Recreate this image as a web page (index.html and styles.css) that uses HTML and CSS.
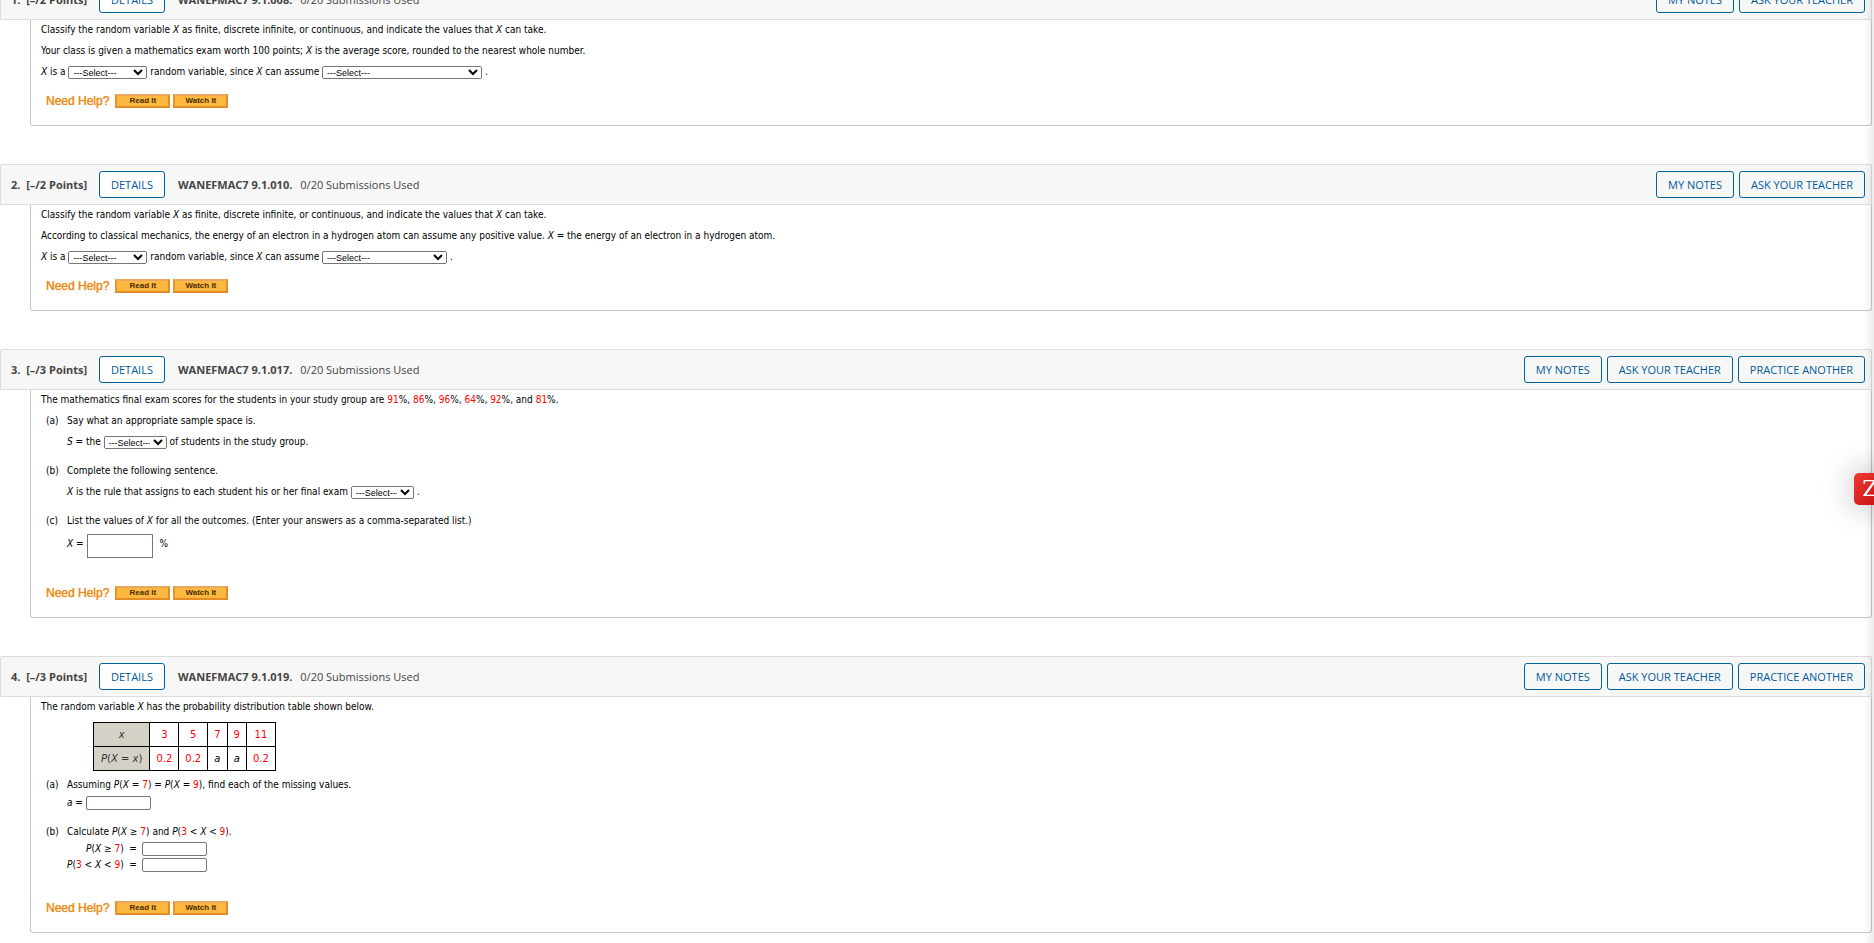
FILE: index.html
```html
<!DOCTYPE html>
<html lang="en">
<head>
<meta charset="utf-8">
<title>Homework</title>
<link rel="stylesheet" href="styles.css">
</head>
<body>
<main class="assignment">

  <section class="question">
    <header class="bar">
      <span class="points">1.&nbsp; [–/2 Points]</span>
      <button class="btn details" type="button">DETAILS</button>
      <strong class="code">WANEFMAC7 9.1.008.</strong>
      <span class="used">0/20 Submissions Used</span>
      <div class="actions">
        <button class="btn" type="button">MY NOTES</button>
        <button class="btn" type="button">ASK YOUR TEACHER</button>
      </div>
    </header>
    <div class="body">
      <p>Classify the random variable <i>X</i> as finite, discrete infinite, or continuous, and indicate the values that <i>X</i> can take.</p>
      <p>Your class is given a mathematics exam worth 100 points; <i>X</i> is the average score, rounded to the nearest whole number.</p>
      <p><i>X</i> is a <select class="sel kind" aria-label="Kind of variable"><option>---Select---</option></select> random variable, since <i>X</i> can assume <select class="sel wide" aria-label="Values"><option>---Select---</option></select> .</p>
      <div class="help"><span class="help-label">Need Help?</span><button class="help-btn" type="button">Read It</button><button class="help-btn" type="button">Watch It</button></div>
    </div>
  </section>

  <section class="question">
    <header class="bar">
      <span class="points">2.&nbsp; [–/2 Points]</span>
      <button class="btn details" type="button">DETAILS</button>
      <strong class="code">WANEFMAC7 9.1.010.</strong>
      <span class="used">0/20 Submissions Used</span>
      <div class="actions">
        <button class="btn" type="button">MY NOTES</button>
        <button class="btn" type="button">ASK YOUR TEACHER</button>
      </div>
    </header>
    <div class="body">
      <p>Classify the random variable <i>X</i> as finite, discrete infinite, or continuous, and indicate the values that <i>X</i> can take.</p>
      <p>According to classical mechanics, the energy of an electron in a hydrogen atom can assume any positive value. <i>X</i> = the energy of an electron in a hydrogen atom.</p>
      <p><i>X</i> is a <select class="sel kind" aria-label="Kind of variable"><option>---Select---</option></select> random variable, since <i>X</i> can assume <select class="sel medium" aria-label="Values"><option>---Select---</option></select> .</p>
      <div class="help"><span class="help-label">Need Help?</span><button class="help-btn" type="button">Read It</button><button class="help-btn" type="button">Watch It</button></div>
    </div>
  </section>

  <section class="question">
    <header class="bar">
      <span class="points">3.&nbsp; [–/3 Points]</span>
      <button class="btn details" type="button">DETAILS</button>
      <strong class="code">WANEFMAC7 9.1.017.</strong>
      <span class="used">0/20 Submissions Used</span>
      <div class="actions">
        <button class="btn" type="button">MY NOTES</button>
        <button class="btn" type="button">ASK YOUR TEACHER</button>
        <button class="btn" type="button">PRACTICE ANOTHER</button>
      </div>
    </header>
    <div class="body">
      <p>The mathematics final exam scores for the students in your study group are <b>91</b>%, <b>86</b>%, <b>96</b>%, <b>64</b>%, <b>92</b>%, and <b>81</b>%.</p>
      <div class="parts">
        <div class="part">
          <span>(a)</span>
          <div>
            <p>Say what an appropriate sample space is.</p>
            <p><i>S</i> = the <select class="sel short" aria-label="Sample space"><option>---Select---</option></select> of students in the study group.</p>
          </div>
        </div>
        <div class="part">
          <span>(b)</span>
          <div>
            <p>Complete the following sentence.</p>
            <p><i>X</i> is the rule that assigns to each student his or her final exam <select class="sel short" aria-label="Rule"><option>---Select---</option></select> .</p>
          </div>
        </div>
        <div class="part">
          <span>(c)</span>
          <div>
            <p>List the values of <i>X</i> for all the outcomes. (Enter your answers as a comma-separated list.)</p>
            <div class="answer"><label for="x-values"><i>X</i> =</label><input class="math" id="x-values" type="text"><span>%</span></div>
          </div>
        </div>
      </div>
      <div class="help far"><span class="help-label">Need Help?</span><button class="help-btn" type="button">Read It</button><button class="help-btn" type="button">Watch It</button></div>
    </div>
  </section>

  <section class="question">
    <header class="bar">
      <span class="points">4.&nbsp; [–/3 Points]</span>
      <button class="btn details" type="button">DETAILS</button>
      <strong class="code">WANEFMAC7 9.1.019.</strong>
      <span class="used">0/20 Submissions Used</span>
      <div class="actions">
        <button class="btn" type="button">MY NOTES</button>
        <button class="btn" type="button">ASK YOUR TEACHER</button>
        <button class="btn" type="button">PRACTICE ANOTHER</button>
      </div>
    </header>
    <div class="body">
      <p>The random variable <i>X</i> has the probability distribution table shown below.</p>
      <table class="dist">
        <tr><th scope="row"><i>x</i></th><td><b>3</b></td><td><b>5</b></td><td><b>7</b></td><td><b>9</b></td><td><b>11</b></td></tr>
        <tr><th scope="row"><i>P</i>(<i>X</i> = <i>x</i>)</th><td><b>0.2</b></td><td><b>0.2</b></td><td><i>a</i></td><td><i>a</i></td><td><b>0.2</b></td></tr>
      </table>
      <div class="parts">
        <div class="part">
          <span>(a)</span>
          <div>
            <p>Assuming <i>P</i>(<i>X</i> = <b>7</b>) = <i>P</i>(<i>X</i> = <b>9</b>), find each of the missing values.</p>
            <div class="answer"><label for="a-value"><i>a</i> =</label><input class="num" id="a-value" type="text"></div>
          </div>
        </div>
        <div class="part">
          <span>(b)</span>
          <div>
            <p>Calculate <i>P</i>(<i>X</i> ≥ <b>7</b>) and <i>P</i>(<b>3</b> &lt; <i>X</i> &lt; <b>9</b>).</p>
            <div class="equations">
              <label for="p1"><i>P</i>(<i>X</i> ≥ <b>7</b>) &nbsp;=</label><input class="num" id="p1" type="text">
              <label for="p2"><i>P</i>(<b>3</b> &lt; <i>X</i> &lt; <b>9</b>) &nbsp;=</label><input class="num" id="p2" type="text">
            </div>
          </div>
        </div>
      </div>
      <div class="help far"><span class="help-label">Need Help?</span><button class="help-btn" type="button">Read It</button><button class="help-btn" type="button">Watch It</button></div>
    </div>
  </section>
</main>

<div class="edge"></div>
<button class="tab" type="button" aria-label="Open side panel">Z</button>
</body>
</html>
```
FILE: styles.css
```css
* { box-sizing: border-box; }

html { overflow: hidden; }

body {
  margin: 0;
  background: #fff;
  color: #000;
  font: 10px/18px "DejaVu Sans Condensed", Tahoma, sans-serif;
}

/* Scrolled slightly into the first question */
.assignment {
  margin-top: -21px;
  padding-right: 2px;
}

.question { margin-bottom: 38px; }

.bar {
  display: flex;
  align-items: center;
  padding: 6px 6px 6px 10px;
  border: 1px solid #dcdcdc;
  border-radius: 2px 2px 0 0;
  background: #f7f7f7;
  color: #444;
  font: 11px/16px "Open Sans", sans-serif;
}

.points, .code { font-weight: 700; }
.points { width: 76px; margin-right: 12px; white-space: nowrap; }
.code { margin: 0 8px 0 13px; }

.actions {
  display: flex;
  gap: 5px;
  margin-left: auto;
}

.btn {
  height: 27px;
  padding: 0 11px;
  border: 1px solid #006298;
  border-radius: 3px;
  background: #fff0;
  color: #00599c;
  font: 11px/16px "Open Sans", sans-serif;
  white-space: nowrap;
}
.details { background: #fff; }

.body {
  margin-left: 30px;
  padding: 1px 10px 17px;
  border: 1px solid #c8c8c8;
  border-top: 0;
  border-radius: 0 0 3px 3px;
}

p { margin: 0; }
p + p { margin-top: 3px; }
b { color: #f00; font-weight: 400; }

.sel {
  height: 13px;
  padding: 0;
  vertical-align: middle;
  font: 9px "Liberation Sans", Arial, sans-serif;
}
.kind { width: 79px; }
.wide { width: 160px; }
.medium { width: 125px; }
.short { width: 63px; }

.parts {
  display: grid;
  gap: 11px;
  margin: 3px 0 0 5px;
}
.part {
  display: grid;
  grid-template-columns: 21px 1fr;
}

.answer { display: flex; align-items: center; }

.math, .num {
  padding: 0 2px;
  border: 1px solid #767676;
  background: #fff;
}
.math {
  width: 66px;
  height: 24px;
  margin: 4px 7px 0 3px;
}
.num {
  width: 65px;
  height: 14px;
  border-radius: 2px;
}
.answer .num { margin-left: 3px; }

.equations {
  display: grid;
  grid-template-columns: max-content max-content;
  grid-auto-rows: 16px;
  column-gap: 5px;
  align-items: center;
  text-align: right;
}

.dist {
  margin: 6px 0 5px 52px;
  border-collapse: collapse;
  font-family: "DejaVu Sans", Verdana, sans-serif;
  line-height: 15px;
  text-align: center;
}
.dist th, .dist td {
  padding: 4px 6px;
  border: 1px solid #000;
  font-weight: 400;
}
.dist th { padding: 4px 7px; background: #d6d1c7; color: #333; }

.help {
  display: flex;
  align-items: center;
  gap: 3px;
  height: 14px;
  margin: 13px 0 0 5px;
}
.far { margin-top: 28px; }

.help-label {
  margin-right: 3px;
  color: #ea8a1c;
  font: 12px/14px "Liberation Sans", Arial, sans-serif;
  text-shadow: 0 0 1px #ea8a1c;
}
.help-btn {
  width: 55px;
  height: 14px;
  padding: 0;
  border: 2px solid;
  border-color: #e8a860 #e68a28 #e58b27 #e9932f;
  background: #fdb93f;
  color: #4a2c00;
  font: bold 8px/10px "Liberation Sans", Arial, sans-serif;
}

/* Side panel: its shadow and pull tab overlap the page's right edge */
.edge {
  position: fixed;
  inset: 0 0 0 auto;
  width: 10px;
  background: linear-gradient(to right, transparent, rgba(0, 0, 0, 0.07));
  pointer-events: none;
}
.tab {
  position: fixed;
  top: 473px;
  right: -12px;
  width: 32px;
  height: 32px;
  padding: 0;
  border: 0;
  border-radius: 5px 0 0 5px;
  background: linear-gradient(135deg, #ee3a33, #c40d0d);
  box-shadow: 0 0 32px rgba(0, 0, 0, 0.3);
  color: #fff;
  font: 22px/32px "DejaVu Serif", serif;
}
```
